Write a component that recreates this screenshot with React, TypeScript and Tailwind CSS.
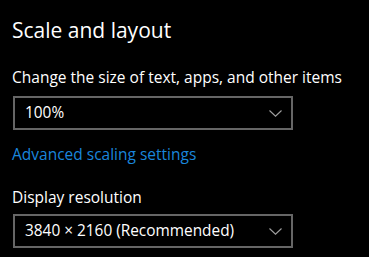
import React from "react";

const Chevron = () => (
  <svg width="13" height="7" viewBox="0 0 13 7" fill="none" className="shrink-0">
    <path d="M0.5 0.5 L6.5 6.2 L12.5 0.5" stroke="#a0a0a0" strokeWidth="1.1" />
  </svg>
);

const Dropdown = ({ value }: { value: string }) => (
  <div className="flex items-center justify-between w-[280px] h-[34px] border-2 border-[#666666] pl-[10px] pr-[9px]">
    <span className="text-[15.4px] leading-[20px] text-white">{value}</span>
    <Chevron />
  </div>
);

export default function App() {
  return (
    <div
      className="w-[369px] h-[257px] bg-black text-white pl-[12px] pt-[16px] overflow-hidden"
      style={{ fontFamily: '"Segoe UI", "Open Sans", "Noto Sans", sans-serif' }}
    >
      <h1 className="text-[21px] leading-[28px] font-normal">Scale and layout</h1>

      <p className="mt-[23px] text-[15.5px] leading-[20px]">
        Change the size of text, apps, and other items
      </p>
      <div className="mt-[9px] pl-[1px]">
        <Dropdown value="100%" />
      </div>

      <a className="block mt-[14px] text-[15.5px] leading-[20px] text-[#1a86dc]">
        Advanced scaling settings
      </a>

      <p className="mt-[23px] text-[15.5px] leading-[20px]">Display resolution</p>
      <div className="mt-[7px] pl-[1px]">
        <Dropdown value="3840 × 2160 (Recommended)" />
      </div>
    </div>
  );
}
